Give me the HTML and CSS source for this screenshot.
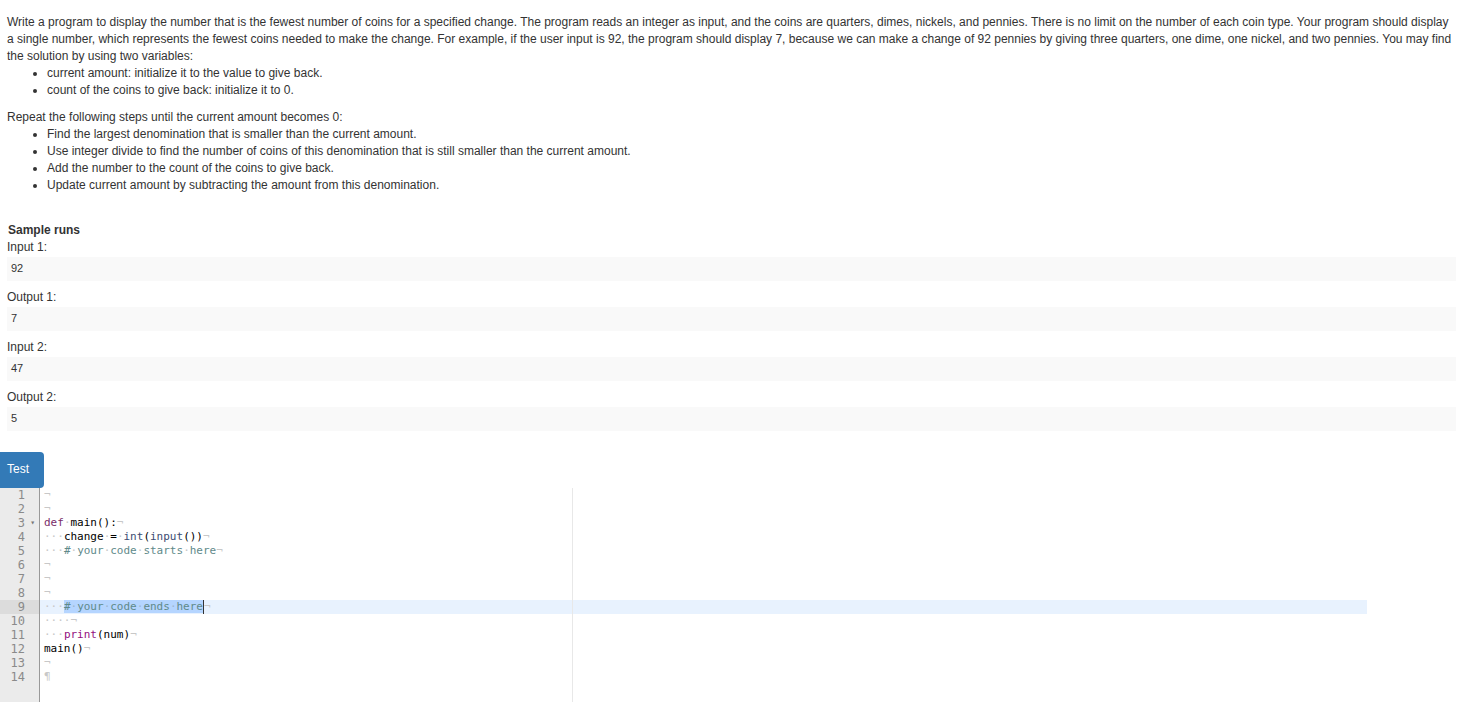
FILE: index.html
```html
<!DOCTYPE html>
<html>
<head>
<meta charset="utf-8">
<link rel="stylesheet" href="styles.css">
</head>
<body>
<div class="page">
  <div class="prompt">
    <p class="para">Write a program to display the number that is the fewest number of coins for a specified change. The program reads an integer as input, and the coins are quarters, dimes, nickels, and pennies. There is no limit on the number of each coin type. Your program should display a single number, which represents the fewest coins needed to make the change. For example, if the user input is 92, the program should display 7, because we can make a change of 92 pennies by giving three quarters, one dime, one nickel, and two pennies. You may find the solution by using two variables:</p>
    <ul class="list">
      <li>current amount: initialize it to the value to give back.</li>
      <li>count of the coins to give back: initialize it to 0.</li>
    </ul>
    <p class="para">Repeat the following steps until the current amount becomes 0:</p>
    <ul class="list">
      <li>Find the largest denomination that is smaller than the current amount.</li>
      <li>Use integer divide to find the number of coins of this denomination that is still smaller than the current amount.</li>
      <li>Add the number to the count of the coins to give back.</li>
      <li>Update current amount by subtracting the amount from this denomination.</li>
    </ul>
  </div>
  <div class="samples">
    <div class="samples-title">Sample runs</div>
    <div class="label">Input 1:</div>
    <div class="box">92</div>
    <div class="label">Output 1:</div>
    <div class="box">7</div>
    <div class="label">Input 2:</div>
    <div class="box">47</div>
    <div class="label">Output 2:</div>
    <div class="box">5</div>
  </div>
</div>
<button class="test-btn">Test</button>
<div class="editor">
  <div class="gutter">
    <div class="gl">1</div>
    <div class="gl">2</div>
    <div class="gl">3<span class="fold">▾</span></div>
    <div class="gl">4</div>
    <div class="gl">5</div>
    <div class="gl">6</div>
    <div class="gl">7</div>
    <div class="gl">8</div>
    <div class="gl gl-active">9</div>
    <div class="gl">10</div>
    <div class="gl">11</div>
    <div class="gl">12</div>
    <div class="gl">13</div>
    <div class="gl">14</div>
  </div>
  <div class="code">
    <div class="margin-line"></div>
    <div class="ln"><span class="inv">¬</span></div>
    <div class="ln"><span class="inv">¬</span></div>
    <div class="ln"><span class="kw">def</span><span class="inv">·</span>main():<span class="inv">¬</span></div>
    <div class="ln"><span class="inv">···</span>change<span class="inv">·</span>=<span class="inv">·</span><span class="fn">int</span>(<span class="fn">input</span>())<span class="inv">¬</span></div>
    <div class="ln"><span class="inv">···</span><span class="cm">#<span class="inv">·</span>your<span class="inv">·</span>code<span class="inv">·</span>starts<span class="inv">·</span>here</span><span class="inv">¬</span></div>
    <div class="ln"><span class="inv">¬</span></div>
    <div class="ln"><span class="inv">¬</span></div>
    <div class="ln"><span class="inv">¬</span></div>
    <div class="ln ln-active"><span class="inv">···</span><span class="sel cm">#<span class="inv">·</span>your<span class="inv">·</span>code<span class="inv">·</span>ends<span class="inv">·</span>here</span><span class="cursor"></span><span class="inv">¬</span></div>
    <div class="ln"><span class="inv">····¬</span></div>
    <div class="ln"><span class="inv">···</span><span class="pr">print</span>(num)<span class="inv">¬</span></div>
    <div class="ln">main()<span class="inv">¬</span></div>
    <div class="ln"><span class="inv">¬</span></div>
    <div class="ln"><span class="inv">¶</span></div>
  </div>
</div>
</body>
</html>
```
FILE: styles.css
```css
html, body {
  margin: 0;
  padding: 0;
  background: #fff;
}
body {
  font-family: "Liberation Sans", Arial, sans-serif;
  font-size: 12px;
  color: #333;
  overflow: hidden;
}
.page {
  padding: 14px 15px 0 7px;
}
.para {
  margin: 0;
  line-height: 17px;
}
.list {
  margin: 0 0 10px 0;
  padding-left: 40px;
  line-height: 17px;
}
.samples {
  padding-top: 18px;
}
.samples-title {
  font-weight: bold;
  line-height: 17px;
  color: #333;
  padding-left: 1px;
}
.label {
  line-height: 17px;
}
.box {
  margin: 1px 0 8px 0;
  height: 24px;
  line-height: 22px;
  padding-left: 4px;
  background: #f9f9f9;
  font-size: 11px;
  color: #333;
}
.test-btn {
  display: block;
  margin: 21px 0 0 0;
  width: 44px;
  height: 36px;
  border: none;
  border-radius: 0 4px 4px 0;
  background: #337ab7;
  color: #fff;
  font-family: "Liberation Sans", Arial, sans-serif;
  font-size: 12px;
  text-align: left;
  padding: 0 0 2px 7px;
}
.editor {
  display: flex;
  width: 1367px;
  height: 230px;
  font-family: "DejaVu Sans Mono", "Liberation Mono", monospace;
  font-size: 11px;
  line-height: 14px;
}
.gutter {
  width: 39px;
  background: #ebebeb;
  border-right: 1px solid #999;
  color: #8a8a8a;
  flex: none;
  font-size: 12px;
}
.gl {
  position: relative;
  height: 14px;
  padding-right: 14px;
  text-align: right;
}
.gl-active {
  background: #dcdcdc;
}
.fold {
  position: absolute;
  right: 4px;
  top: 0;
  font-size: 8px;
  color: #777;
}
.code {
  position: relative;
  flex: 1;
  color: #000;
}
.margin-line {
  position: absolute;
  left: 532px;
  top: 0;
  bottom: 0;
  width: 1px;
  background: #e8e8e8;
}
.ln {
  height: 14px;
  padding-left: 4px;
  white-space: pre;
}
.ln-active {
  background: #e8f2fe;
}
.inv {
  color: #c8c8c8;
}
.kw {
  color: #7a2d6a;
}
.fn {
  color: #3c4c72;
}
.pr {
  color: #930f80;
}
.cm {
  color: #5f8a8a;
}
.sel {
  background: #b5d5ff;
}
.sel .inv {
  color: #9fb7cf;
}
.cursor {
  display: inline-block;
  width: 1px;
  height: 14px;
  background: #333;
  vertical-align: top;
}
```
